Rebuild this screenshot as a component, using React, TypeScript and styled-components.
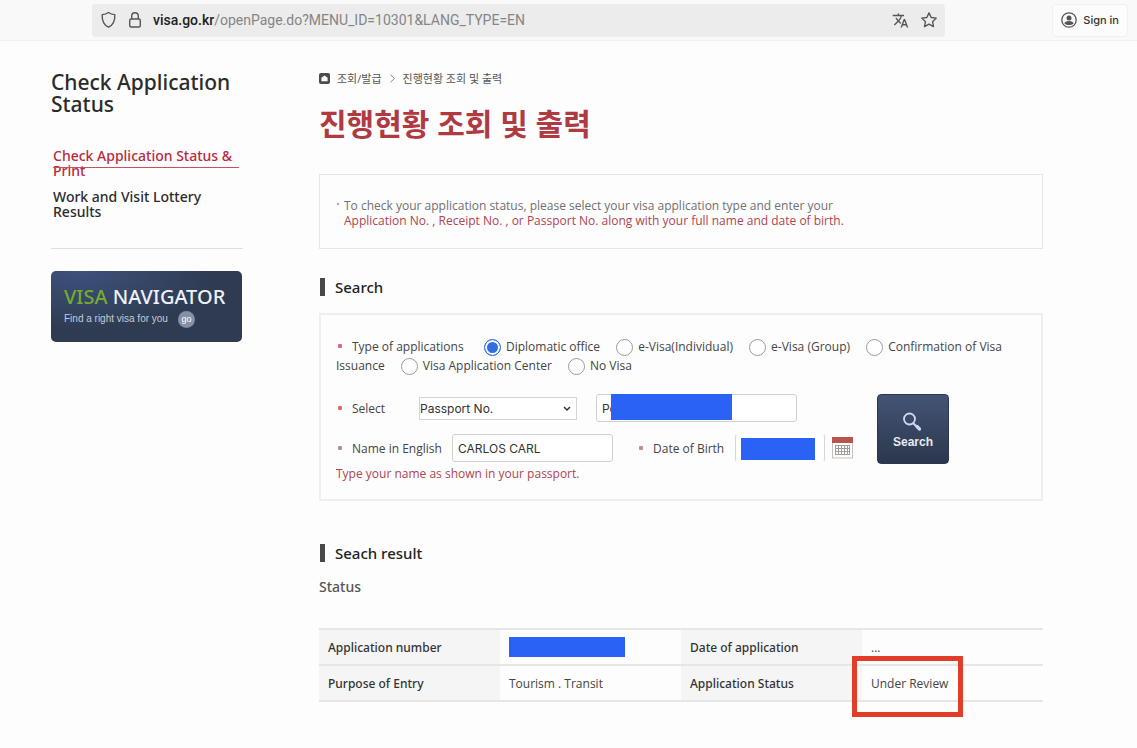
import React from "react";
import styled, { createGlobalStyle } from "styled-components";
import { MdTranslate } from "react-icons/md";

const GlobalStyle = createGlobalStyle`
  *, *::before, *::after { box-sizing: border-box; }
  body {
    margin: 0;
    background: #fdfdfd;
    color: #444;
    font-family: "Open Sans", "Noto Sans CJK KR", sans-serif;
    font-size: 12px;
  }
  h1, h2, h3, p, ul, fieldset { margin: 0; padding: 0; border: 0; }
  ul { list-style: none; }
  a { color: inherit; text-decoration: none; }
`;

const uiFont = `Inter, "Liberation Sans", sans-serif`;
const headingFont = `"Noto Sans", "Noto Sans CJK KR", sans-serif`;

const BrowserBar = styled.header`
  display: flex;
  align-items: center;
  height: 41px;
  padding: 0 9px 0 92px;
  background: #f9f9f9;
  border-bottom: 1px solid #f0f0f0;
  font-family: ${uiFont};
`;

const AddressBar = styled.div`
  display: flex;
  flex: 1;
  align-items: center;
  height: 33px;
  padding: 0 7px 0 8px;
  border-radius: 4px;
  background: #ececec;
  color: #555;
`;

const Address = styled.span`
  flex: 1;
  margin-left: 11px;
  color: #858585;
  font-family: Roboto, "Liberation Sans", sans-serif;
  font-size: 14px;
  b { color: #222; font-weight: 500; }
`;

const IconButton = styled.button<{ $gap?: number }>`
  display: flex;
  margin: 0 0 0 ${(p) => p.$gap ?? 11}px;
  padding: 0;
  border: 0;
  background: none;
  color: #555;
`;

const SignIn = styled.button`
  display: flex;
  align-items: center;
  gap: 6px;
  height: 33px;
  margin-left: 107px;
  padding: 0 8px;
  border: 1px solid #f0f0f0;
  border-radius: 4px;
  background: #fcfcfc;
  color: #333;
  font-family: ${uiFont};
  font-size: 11px;
  font-weight: 500;
  white-space: nowrap;
`;

const Page = styled.div`
  display: grid;
  grid-template-columns: 192px minmax(0, 1fr);
  gap: 76px;
  padding: 30px 94px 40px 51px;
`;

const SideTitle = styled.h2`
  color: #2b2b2b;
  font-family: ${headingFont};
  font-size: 21px;
  font-weight: 500;
  line-height: 22px;
`;

const SideNav = styled.ul`
  display: grid;
  gap: 11px;
  margin-top: 33px;
  padding: 0 0 29px 2px;
  border-bottom: 1px solid #dedede;
`;

const SideLink = styled.a<{ $active?: boolean }>`
  position: relative;
  display: block;
  color: ${(p) => (p.$active ? "#b8293c" : "#2b2b2b")};
  font-family: ${headingFont};
  font-size: 14px;
  font-weight: 500;
  line-height: 15px;
  &::after {
    content: "";
    display: ${(p) => (p.$active ? "block" : "none")};
    position: absolute;
    top: 19px;
    left: 0;
    right: 4px;
    height: 1px;
    background: #c4525f;
  }
`;

const Banner = styled.a`
  display: block;
  height: 71px;
  margin: 22px 1px 0 0;
  padding: 14px 0 0 13px;
  border-radius: 5px;
  background: radial-gradient(ellipse at 15% 0, #3d517c, #2e3b50 60%);
  color: #eef0fa;
  white-space: nowrap;
`;

const BannerTitle = styled.span`
  display: block;
  font-family: ${headingFont};
  font-size: 20px;
  font-weight: 500;
  line-height: 24px;
  em { color: #74ac2e; font-style: normal; }
`;

const BannerNote = styled.span`
  display: flex;
  align-items: center;
  gap: 10px;
  color: #c5cbd8;
  font: 10px/20px "Liberation Sans", sans-serif;
`;

const Go = styled.span`
  width: 17px;
  height: 17px;
  border-radius: 50%;
  background: #8590a6;
  color: #fff;
  font-size: 9px;
  line-height: 16px;
  text-align: center;
`;

const Breadcrumb = styled.nav`
  display: flex;
  align-items: center;
  height: 14px;
  color: #555;
  font-size: 11px;
  gap: 7px;
`;

const Title = styled.h1`
  margin-top: 19px;
  color: #b03a42;
  font-size: 30px;
  font-weight: 700;
  line-height: 40px;
`;

const Notice = styled.div`
  margin-top: 30px;
  padding: 23px 24px 20px;
  border: 1px solid #e6e6e6;
  color: #707070;
  line-height: 15px;
`;

const NoticeText = styled.p`
  position: relative;
  &::before {
    content: "";
    position: absolute;
    top: 5px;
    left: -7px;
    width: 2px;
    height: 2px;
    background: #aaa;
  }
`;

const Red = styled.span`
  color: #b0444f;
`;

const SectionTitle = styled.h2<{ $gap: number }>`
  display: flex;
  align-items: center;
  gap: 10px;
  margin-top: ${(p) => p.$gap}px;
  padding-left: 1px;
  color: #222;
  font-family: ${headingFont};
  font-size: 15px;
  font-weight: 500;
  line-height: 20px;
  &::before {
    content: "";
    width: 5px;
    height: 18px;
    background: #484848;
  }
`;

const SearchForm = styled.form`
  margin-top: 16px;
  padding: 22px 15px 16px;
  border: 2px solid #eeeeee;
`;

const TypeChoice = styled.fieldset`
  min-width: 0;
  line-height: 19px;
`;

const Required = styled.span<{ $muted?: boolean }>`
  display: inline-block;
  flex: none;
  width: 4px;
  height: 4px;
  margin: 0 10px 0 2px;
  border-radius: 1px;
  background: ${(p) => (p.$muted ? "#b98d92" : "#e0677a")};
  vertical-align: 3px;
`;

const ChoiceTitle = styled.span`
  display: inline-block;
  width: 130px;
`;

const Choice = styled.label`
  margin-right: 11px;
`;

const Radio = styled.input`
  appearance: none;
  width: 17px;
  height: 17px;
  margin: 0 5px 0 2px;
  border: 1px solid #999;
  border-radius: 50%;
  background: #fff;
  vertical-align: -5px;
  &:checked {
    border-color: #2f6fe0;
    background: #2f6fe0;
    box-shadow: inset 0 0 0 2px #fff;
  }
`;

const FormBody = styled.div`
  display: flex;
  align-items: flex-start;
  gap: 24px;
  margin-top: 19px;
`;

const Fields = styled.div`
  width: 517px;
`;

const FieldRow = styled.div`
  display: flex;
  align-items: center;
  height: 28px;
  margin-bottom: 12px;
`;

const FieldLabel = styled.label<{ $width: number }>`
  flex: none;
  width: ${(p) => p.$width}px;
  white-space: nowrap;
`;

const Select = styled.select`
  appearance: none;
  width: 100%;
  height: 23px;
  padding: 0 20px 0 0;
  border: 1px solid #d4d4d4;
  border-radius: 0;
  background: #fff;
  color: #333;
  font: 12px ${uiFont};
`;

const SelectBox = styled.div`
  position: relative;
  width: 158px;
  margin-right: 19px;
  svg {
    position: absolute;
    top: 9px;
    right: 6px;
  }
`;

const Covered = styled.div<{ $width: number }>`
  position: relative;
  flex: none;
  width: ${(p) => p.$width}px;
`;

const TextInput = styled.input<{ $sidesOnly?: boolean }>`
  display: block;
  width: 100%;
  height: 28px;
  padding: 0 5px;
  border: 1px solid;
  border-color: ${(p) => (p.$sidesOnly ? "transparent #d6d6d6" : "#cfcfcf")};
  border-radius: 3px;
  background: #fff;
  color: #333;
  font: 12px ${uiFont};
`;

const Mask = styled.span<{ $left?: number; $top?: number; $width: number; $height: number; $over?: boolean }>`
  display: block;
  position: ${(p) => (p.$over ? "absolute" : "static")};
  top: ${(p) => p.$top ?? 0}px;
  left: ${(p) => p.$left ?? 0}px;
  width: ${(p) => p.$width}px;
  height: ${(p) => p.$height}px;
  background: #2962f5;
`;

const Hint = styled.p`
  margin-top: -9px;
  color: #b0444f;
  line-height: 18px;
`;

const SearchButton = styled.button`
  display: flex;
  flex: none;
  flex-direction: column;
  align-items: center;
  gap: 1px;
  width: 72px;
  height: 70px;
  padding: 17px 0 0;
  border: 1px solid #2b3850;
  border-radius: 4px;
  background: linear-gradient(#435475, #2b374d);
  color: #e6eaf5;
  font: 700 12px/18px "Liberation Sans", sans-serif;
`;

const StatusTitle = styled.h3`
  margin-top: 14px;
  color: #555;
  font-family: ${headingFont};
  font-size: 14px;
  font-weight: 500;
  line-height: 20px;
`;

const ResultTable = styled.table`
  width: 100%;
  margin-top: 31px;
  border-collapse: collapse;
  table-layout: fixed;
  tr { height: 36px; border-bottom: 2px solid #e6e6e6; }
  tr:first-child { border-top: 2px solid #e6e6e6; }
  th, td { padding: 0 9px; text-align: left; }
  th { background: #f5f5f5; color: #333; font-family: ${headingFont}; font-weight: 500; }
  td { position: relative; }
`;

const Highlight = styled.span`
  position: absolute;
  top: -10px;
  left: -10px;
  width: 111px;
  height: 61px;
  border: 5px solid #e23d29;
`;

const ShieldIcon = () => (
  <svg width="17" height="18" viewBox="0 0 17 18" fill="none" stroke="currentColor" strokeWidth="1.4" strokeLinejoin="round">
    <path d="M8.5 1.5C6.5 3 4.3 3.5 2.2 3.6C1.9 9.5 3.2 13.8 8.5 16.2C13.8 13.8 15.1 9.5 14.8 3.6C12.7 3.5 10.5 3 8.5 1.5Z" />
  </svg>
);

const LockIcon = () => (
  <svg width="14" height="18" viewBox="0 0 14 18" fill="none" stroke="currentColor" strokeWidth="1.4">
    <rect x="1.7" y="8" width="10.6" height="8" rx="1.5" />
    <path d="M3.7 8V5a3.3 3.3 0 0 1 6.6 0v3" />
  </svg>
);

const StarIcon = () => (
  <svg width="18" height="18" viewBox="0 0 24 24" fill="none" stroke="currentColor" strokeWidth="1.8" strokeLinejoin="round">
    <path d="M12 2.5l2.9 6.2 6.8.8-5 4.7 1.3 6.7-6-3.3-6 3.3 1.3-6.7-5-4.7 6.8-.8z" />
  </svg>
);

const AccountIcon = () => (
  <svg width="16" height="16" viewBox="0 0 16 16" fill="none">
    <circle cx="8" cy="8" r="7.2" stroke="#555" strokeWidth="1.3" />
    <circle cx="8" cy="6" r="2.5" fill="#555" />
    <path d="M3.5 11.8c0-2.1 2-2.9 4.5-2.9s4.5.8 4.5 2.9c-2.3 1.7-6.7 1.7-9 0z" fill="#555" />
  </svg>
);

const HomeIcon = () => (
  <svg width="11" height="11" viewBox="0 0 11 11">
    <rect width="11" height="11" rx="2" fill="#4c4c4c" />
    <path d="M5.5 2.4L8.6 4.8V8.2H2.4V4.8z" fill="#fff" />
  </svg>
);

const CrumbArrow = () => (
  <svg width="7" height="9" viewBox="0 0 7 9" fill="none" stroke="#888">
    <path d="M1.5 .8L5.5 4.5L1.5 8.2" />
  </svg>
);

const CalendarIcon = () => (
  <svg width="21" height="22" viewBox="0 0 21 22">
    <rect x=".5" y="1" width="20" height="20" fill="#fff" stroke="#c9c1bd" />
    <rect width="21" height="6" fill="#b9534c" />
    <path d="M3 8.5h15M3 11.5h15M3 14.5h15M3 17.5h15M3.5 8v10M6.5 8v10M9.5 8v10M12.5 8v10M15.5 8v10M17.5 8v10" stroke="#a09c9a" fill="none" />
  </svg>
);

const MagnifierIcon = () => (
  <svg width="20" height="20" viewBox="0 0 20 20" fill="none" stroke="#cfd8ee" strokeLinecap="round">
    <circle cx="6.5" cy="7" r="5.5" strokeWidth="1.8" />
    <path d="M10.5 11.5l2.500 2.500" strokeWidth="2" />
    <path d="M14 14.5l2.500 2.500" strokeWidth="3.2" />
  </svg>
);

const choices: React.ReactNode[] = [
  "Diplomatic office",
  "e-Visa(Individual)",
  "e-Visa (Group)",
  <>Confirmation of Visa <span>Issuance</span></>,
  "Visa Application Center",
  "No Visa",
];

export default function App() {
  return (
    <>
      <GlobalStyle />
      <BrowserBar>
        <AddressBar>
          <ShieldIcon />
          <IconButton aria-label="Connection is secure"><LockIcon /></IconButton>
          <Address><b>visa.go.kr</b>/openPage.do?MENU_ID=10301&amp;LANG_TYPE=EN</Address>
          <IconButton aria-label="Translate page"><MdTranslate size={17} /></IconButton>
          <IconButton aria-label="Bookmark"><StarIcon /></IconButton>
        </AddressBar>
        <SignIn><AccountIcon />Sign in</SignIn>
      </BrowserBar>
      <Page>
        <aside>
          <SideTitle>Check Application Status</SideTitle>
          <SideNav>
            <li><SideLink href="#status" $active>Check Application Status &amp; Print</SideLink></li>
            <li><SideLink href="#lottery">Work and Visit Lottery Results</SideLink></li>
          </SideNav>
          <Banner href="#navigator">
            <BannerTitle><em>VISA</em> NAVIGATOR</BannerTitle>
            <BannerNote>Find a right visa for you <Go>go</Go></BannerNote>
          </Banner>
        </aside>
        <main>
          <Breadcrumb>
            <HomeIcon />
            <a href="#issue">조회/발급</a>
            <CrumbArrow />
            <span>진행현황 조회 및 출력</span>
          </Breadcrumb>
          <Title>진행현황 조회 및 출력</Title>
          <Notice>
            <NoticeText>
              To check your application status, please select your visa application type and enter your
              <br />
              <Red>Application No. , Receipt No. , or Passport No. along with your full name and date of birth.</Red>
            </NoticeText>
          </Notice>

          <SectionTitle $gap={28}>Search</SectionTitle>
          <SearchForm onSubmit={(e) => e.preventDefault()}>
            <TypeChoice aria-labelledby="type-title">
              <Required />
              <ChoiceTitle id="type-title">Type of applications</ChoiceTitle>
              {choices.map((name, i) => (
                <React.Fragment key={i}>
                  <Choice>
                    <Radio type="radio" name="type" defaultChecked={i === 0} />
                    {name}
                  </Choice>{" "}
                </React.Fragment>
              ))}
            </TypeChoice>
            <FormBody>
              <Fields>
                <FieldRow>
                  <Required />
                  <FieldLabel $width={67} htmlFor="kind">Select</FieldLabel>
                  <SelectBox>
                    <Select id="kind"><option>Passport No.</option></Select>
                    <svg width="8" height="6" viewBox="0 0 8 6" fill="none" stroke="#333" strokeWidth="1.5"><path d="M1 1l3 3 3-3" /></svg>
                  </SelectBox>
                  <Covered $width={201}>
                    <TextInput aria-label="Passport number" defaultValue="Pe" />
                    <Mask $over $left={15} $top={0} $width={121} $height={26} />
                  </Covered>
                </FieldRow>
                <FieldRow>
                  <Required $muted />
                  <FieldLabel $width={100} htmlFor="name">Name in English</FieldLabel>
                  <Covered $width={161}>
                    <TextInput id="name" defaultValue="CARLOS CARL" />
                  </Covered>
                  <FieldLabel as="span" $width={24} />
                  <Required $muted />
                  <FieldLabel $width={82} htmlFor="birth">Date of Birth</FieldLabel>
                  <Covered $width={90}>
                    <TextInput id="birth" $sidesOnly />
                    <Mask $over $left={6} $top={4} $width={74} $height={22} />
                  </Covered>
                  <IconButton type="button" aria-label="Pick a date" $gap={7}><CalendarIcon /></IconButton>
                </FieldRow>
                <Hint>Type your name as shown in your passport.</Hint>
              </Fields>
              <SearchButton type="submit"><MagnifierIcon />Search</SearchButton>
            </FormBody>
          </SearchForm>

          <SectionTitle $gap={42}>Seach result</SectionTitle>
          <StatusTitle>Status</StatusTitle>
          <ResultTable>
            <tbody>
              <tr>
                <th scope="row">Application number</th>
                <td><Mask $width={116} $height={20} /></td>
                <th scope="row">Date of application</th>
                <td>...</td>
              </tr>
              <tr>
                <th scope="row">Purpose of Entry</th>
                <td>Tourism . Transit</td>
                <th scope="row">Application Status</th>
                <td>Under Review<Highlight /></td>
              </tr>
            </tbody>
          </ResultTable>
        </main>
      </Page>
    </>
  );
}
